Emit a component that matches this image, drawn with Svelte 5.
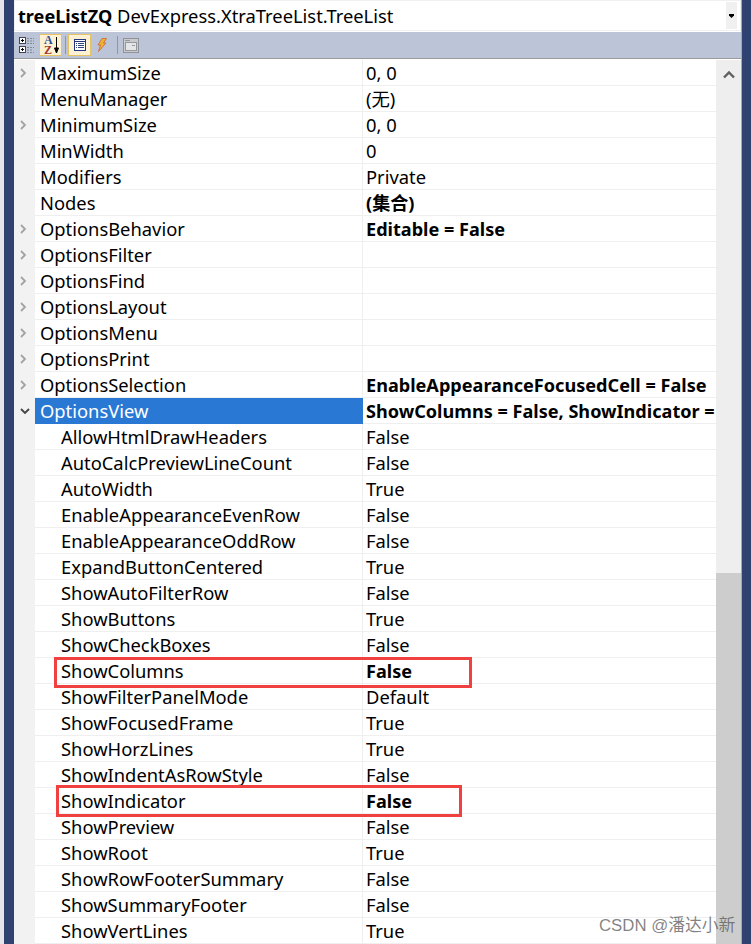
<script lang="ts">
  interface Row {
    name: string;
    value: string;
    bold?: boolean;
    arrow?: boolean;
    child?: boolean;
    selected?: boolean;
  }

  const f = (name: string) => ({ name, value: "False", child: true });
  const t = (name: string) => ({ name, value: "True", child: true });

  const rows: Row[] = [
    { name: "MaximumSize", value: "0, 0", arrow: true },
    { name: "MenuManager", value: "(无)" },
    { name: "MinimumSize", value: "0, 0", arrow: true },
    { name: "MinWidth", value: "0" },
    { name: "Modifiers", value: "Private" },
    { name: "Nodes", value: "(集合)", bold: true },
    { name: "OptionsBehavior", value: "Editable = False", bold: true, arrow: true },
    { name: "OptionsFilter", value: "", arrow: true },
    { name: "OptionsFind", value: "", arrow: true },
    { name: "OptionsLayout", value: "", arrow: true },
    { name: "OptionsMenu", value: "", arrow: true },
    { name: "OptionsPrint", value: "", arrow: true },
    { name: "OptionsSelection", value: "EnableAppearanceFocusedCell = False", bold: true, arrow: true },
    { name: "OptionsView", value: "ShowColumns = False, ShowIndicator = False", bold: true, selected: true },
    f("AllowHtmlDrawHeaders"),
    f("AutoCalcPreviewLineCount"),
    t("AutoWidth"),
    f("EnableAppearanceEvenRow"),
    f("EnableAppearanceOddRow"),
    t("ExpandButtonCentered"),
    f("ShowAutoFilterRow"),
    t("ShowButtons"),
    f("ShowCheckBoxes"),
    { ...f("ShowColumns"), bold: true },
    { name: "ShowFilterPanelMode", value: "Default", child: true },
    t("ShowFocusedFrame"),
    t("ShowHorzLines"),
    f("ShowIndentAsRowStyle"),
    { ...f("ShowIndicator"), bold: true },
    f("ShowPreview"),
    t("ShowRoot"),
    f("ShowRowFooterSummary"),
    f("ShowSummaryFooter"),
    t("ShowVertLines"),
  ];
</script>

<div class="screen">
  <div class="panel">
    <div class="combo">
      <div class="combo-text"><b>treeListZQ</b> DevExpress.XtraTreeList.TreeList</div>
      <div class="combo-btn">
        <svg width="5" height="4" viewBox="0 0 5 4"><path d="M0 0h5v1.5L2.5 4 0 1.5z" fill="#000" /></svg>
      </div>
    </div>

    <div class="toolbar">
      <svg class="tool" width="16" height="16" viewBox="0 0 16 16">
        <rect x="0.5" y="0.5" width="6" height="6" fill="#fff" stroke="#445" />
        <path d="M2 3.5h3M3.5 2v3" stroke="#000" />
        <rect x="0.5" y="9.5" width="6" height="6" fill="#fff" stroke="#445" />
        <path d="M2 12.5h3M3.5 11v3" stroke="#000" />
        <path d="M8 1.5h7M8 4h7M8 6.5h7M8 10.5h7M8 13h5M8 15.5h7" stroke="#7f8a96" stroke-dasharray="2 1" />
      </svg>
      <div class="tool-on az">
        <span class="az-a">A</span>
        <span class="az-z">Z</span>
        <svg class="az-arrow" width="5" height="17" viewBox="0 0 5 17"><path d="M2.5 0v15M0.5 11l2 5 2-5z" stroke="#000" fill="#000" stroke-width="1" /></svg>
      </div>
      <span class="sep"></span>
      <div class="tool-on">
        <svg width="12" height="12" viewBox="0 0 12 12">
          <rect x="0.5" y="0.5" width="11" height="11" fill="#fff" stroke="#26357f" />
          <path d="M0 2.5h12" stroke="#26357f" />
          <path d="M2 4.5h1M4 4.5h6M2 6.5h1M4 6.5h6M2 8.5h1M4 8.5h6" stroke="#31497f" />
        </svg>
      </div>
      <svg class="bolt" width="10" height="14" viewBox="0 0 10 14">
        <path d="M5 0.5h4.5L6.5 5h2.5L1.5 13.5 3.5 7H1z" fill="#f0b030" stroke="#c9653a" stroke-width="0.8" />
      </svg>
      <span class="sep second"></span>
      <svg class="pages" width="16" height="15" viewBox="0 0 16 15">
        <rect x="0.5" y="0.5" width="15" height="14" fill="#c9cbcf" stroke="#8f9296" />
        <rect x="2.5" y="4.5" width="11" height="8" fill="#e4e5e7" stroke="#94979b" />
        <path d="M2 2.5h5M9 7.5h3" stroke="#94979b" />
      </svg>
    </div>

    <div class="grid">
      <div class="rows">
        {#each rows as row}
          <div class="row" class:selected={row.selected}>
            <div class="gutter">
              {#if row.selected}
                <svg width="10" height="7" viewBox="0 0 10 7"><path d="M1 1l4 4 4-4" fill="none" stroke="#444" stroke-width="1.8" /></svg>
              {:else if row.arrow}
                <svg width="7" height="10" viewBox="0 0 7 10"><path d="M1 1l4 4-4 4" fill="none" stroke="#a3a3a3" stroke-width="1.8" /></svg>
              {/if}
            </div>
            <div class="name" class:child={row.child}>{row.name}</div>
            <div class="value" class:bold={row.bold}>{row.value}</div>
          </div>
        {/each}
      </div>
      <div class="scrollbar">
        <div class="scroll-up">
          <svg width="12" height="9" viewBox="0 0 12 9"><path d="M1 7.5l5-5 5 5" fill="none" stroke="#606060" stroke-width="2.4" /></svg>
        </div>
        <div class="scroll-thumb"></div>
      </div>
      <div class="mark mark-columns"></div>
      <div class="mark mark-indicator"></div>
    </div>
  </div>
  <div class="watermark">CSDN @潘达小新</div>
</div>

<style>
  :global(body) {
    margin: 0;
  }

  .screen {
    position: relative;
    width: 751px;
    height: 944px;
    overflow: hidden;
    box-sizing: border-box;
    padding: 0 9px 0 10px;
    background: #2f4270;
    border-left: 4px solid #e4e6ec;
    font-family: "Noto Sans", "Noto Sans CJK SC", sans-serif;
    font-size: 18.35px;
    color: #000;
  }

  .panel {
    height: 100%;
    background: #fff;
    display: flex;
    flex-direction: column;
    border-right: 1px solid #a5a7ab;
  }

  .combo {
    height: 31px;
    flex-shrink: 0;
    display: flex;
    align-items: stretch;
    background: #fff;
    border: 1px solid #f0f0f0;
    box-sizing: border-box;
    padding: 1px 3px 1px 3px;
  }

  .combo-text {
    flex: 1;
    line-height: 27px;
    white-space: nowrap;
  }

  .combo-text b {
    font-size: 18.1px;
  }

  .combo-btn {
    width: 11px;
    background: #f0f0f0;
    display: flex;
    align-items: center;
    justify-content: center;
  }

  .toolbar {
    height: 26px;
    margin-top: 1px;
    flex-shrink: 0;
    background: #bcc5d8;
    border-bottom: 1px solid #9a9a9a;
    display: flex;
    align-items: center;
    padding-left: 5px;
  }

  .tool {
    margin-right: 4px;
  }

  .tool-on {
    width: 23px;
    height: 22px;
    box-sizing: border-box;
    background: #fdf1d3;
    border: 1px solid #e5c365;
    display: flex;
    align-items: center;
    justify-content: center;
    position: relative;
  }

  .az {
    font-family: "Liberation Serif", serif;
    font-size: 12px;
    font-weight: bold;
    line-height: 10px;
  }

  .az-a {
    position: absolute;
    left: 4px;
    top: 0;
    color: #2a4f9f;
  }

  .az-z {
    position: absolute;
    left: 4px;
    top: 10px;
    color: #a03a30;
  }

  .az-arrow {
    position: absolute;
    left: 14px;
    top: 2px;
  }

  .sep {
    width: 1px;
    height: 18px;
    margin: 0 2px 0 3px;
    background: #8f96a3;
  }

  .bolt {
    margin-left: 6px;
  }

  .sep.second {
    margin: 0 5px 0 10px;
  }

  .grid {
    position: relative;
    flex: 1;
    min-height: 0;
    display: flex;
    padding-top: 1px;
  }

  .rows {
    flex: 1;
    min-width: 0;
  }

  .row {
    height: 26px;
    box-sizing: border-box;
    display: flex;
    line-height: 26px;
    white-space: nowrap;
  }

  .gutter {
    width: 21px;
    flex-shrink: 0;
    background: #f2f2f2;
    display: flex;
    align-items: center;
    padding-left: 6px;
    box-sizing: border-box;
  }

  .name {
    width: 328px;
    flex-shrink: 0;
    box-sizing: border-box;
    padding-left: 5px;
    border-bottom: 1px solid #efefef;
    border-right: 1px solid #efefef;
  }

  .name.child {
    padding-left: 26px;
  }

  .value {
    flex: 1;
    min-width: 0;
    overflow: hidden;
    padding-left: 3px;
    border-bottom: 1px solid #efefef;
  }

  .value.bold {
    font-weight: 700;
    font-size: 18.1px;
  }

  .selected .name {
    background: #2878d4;
    color: #fff;
    border-color: #2878d4;
  }

  .scrollbar {
    width: 25px;
    flex-shrink: 0;
    background: #eeeeee;
    display: flex;
    flex-direction: column;
  }

  .scroll-up {
    height: 28px;
    display: flex;
    align-items: center;
    justify-content: center;
  }

  .scroll-thumb {
    margin-top: 485px;
    flex: 1;
    background: #cdcdcd;
  }

  .mark {
    position: absolute;
    box-sizing: border-box;
    border: 3px solid #f04040;
  }

  .mark-columns {
    left: 40px;
    top: 598px;
    width: 418px;
    height: 31px;
  }

  .mark-indicator {
    left: 42px;
    top: 726px;
    width: 406px;
    height: 32px;
  }

  .watermark {
    position: absolute;
    left: 595px;
    top: 915px;
    font-size: 16.8px;
    line-height: 22px;
    color: rgba(90, 90, 90, 0.75);
    font-family: "Liberation Sans", "Noto Sans CJK SC", sans-serif;
    white-space: nowrap;
  }
</style>
